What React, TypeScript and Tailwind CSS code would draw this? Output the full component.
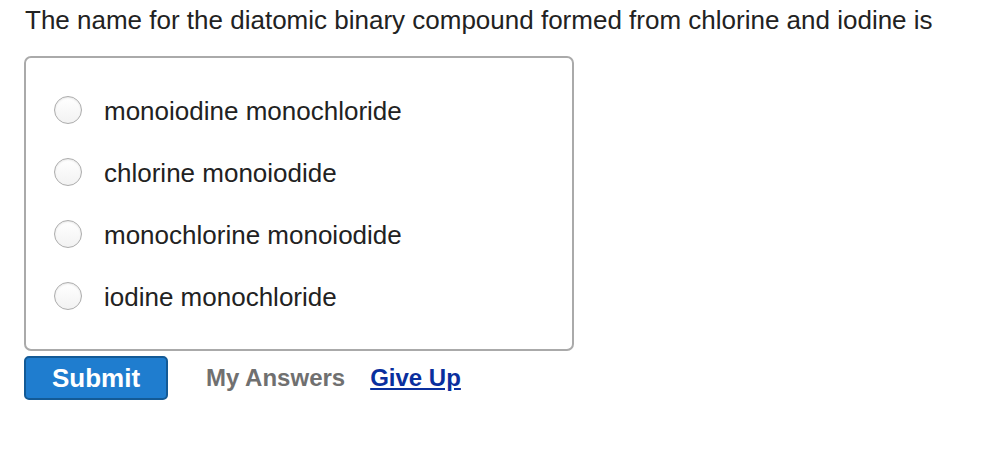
import React from "react";

const options = [
  "monoiodine monochloride",
  "chlorine monoiodide",
  "monochlorine monoiodide",
  "iodine monochloride",
];

export default function App() {
  return (
    <div
      className="w-[996px] h-[456px] bg-white text-[#222] pl-[24px] pt-[2px]"
      style={{ fontFamily: '"Liberation Sans", Arial, sans-serif' }}
    >
      <p className="text-[26px] leading-[36px] pl-[1px]">
        The name for the diatomic binary compound formed from chlorine and iodine is
      </p>
      <div className="mt-[18px] w-[550px] h-[295px] border-2 border-[#aaaaaa] rounded-[7px] pt-[37px] pl-[28px] flex flex-col gap-[33px]">
        {options.map((o) => (
          <label key={o} className="flex items-center h-[29px]">
            <span className="w-[28px] h-[28px] rounded-full border border-[#adadad] bg-gradient-to-b from-white to-[#f2f2f2] shadow-[inset_0_1px_2px_rgba(0,0,0,0.1)]" />
            <span className="ml-[22px] mt-[4px] text-[26px] leading-[29px]">{o}</span>
          </label>
        ))}
      </div>
      <div className="mt-[5px] flex items-center">
        <button className="w-[144px] h-[44px] bg-[#1f7dcf] border-2 border-[#135a96] rounded-[5px] text-white font-bold text-[26px] leading-none">
          Submit
        </button>
        <span className="ml-[38px] text-[24px] font-bold text-[#707070]">My Answers</span>
        <span className="ml-[25px] text-[24px] font-bold text-[#0a2f9e] underline">Give Up</span>
      </div>
    </div>
  );
}
